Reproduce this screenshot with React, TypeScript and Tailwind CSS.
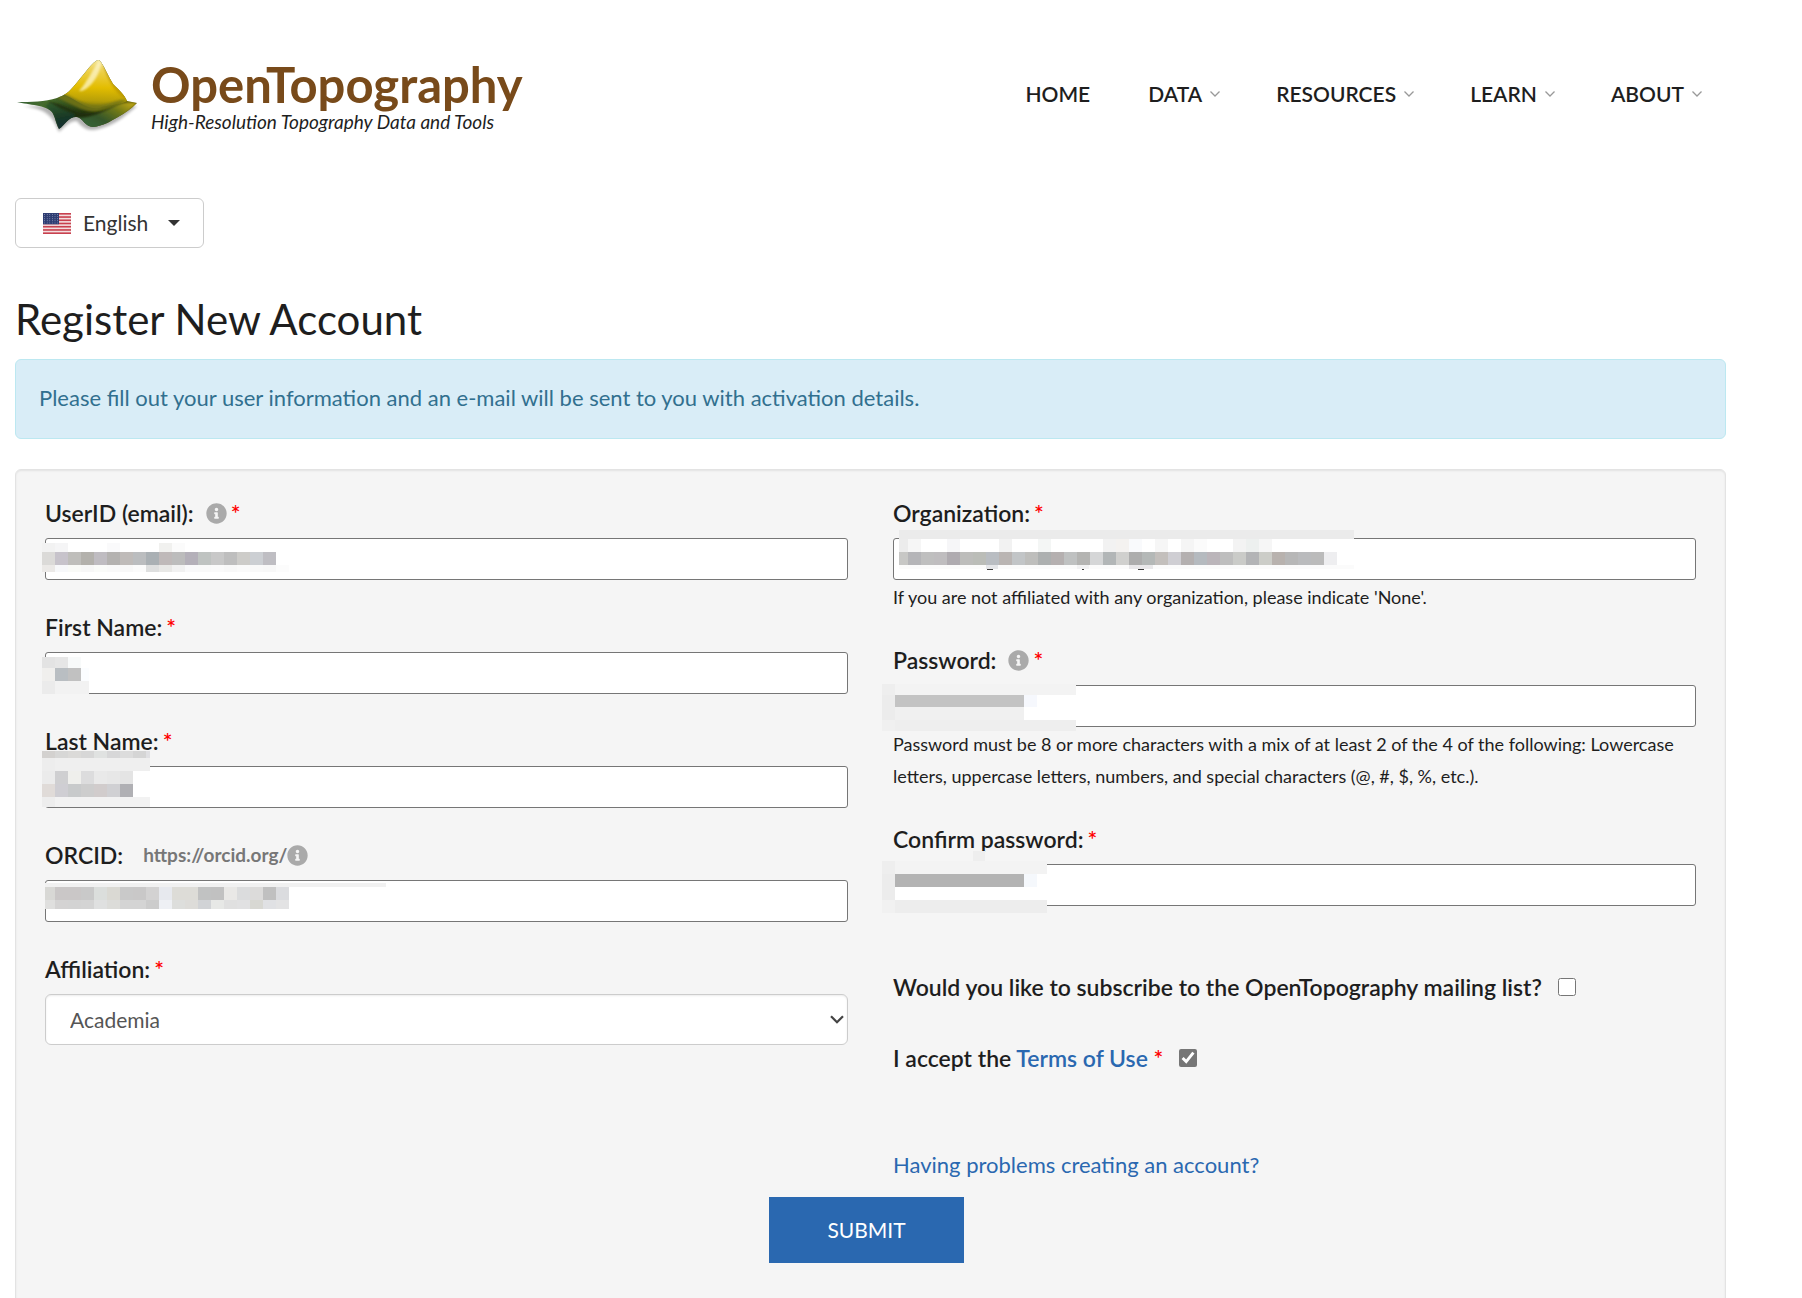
import React, { useState } from 'react';
import { FaInfoCircle } from 'react-icons/fa';

// [x, y, width, height, colour], measured from the top left of the field
type Block = [number, number, number, number, string];

// one row of equally wide blocks; an empty string leaves a gap
const row = (x: number, y: number, h: number, colors: string[], w = 13): Block[] =>
  colors
    .map((c, i): Block => [x + i * w, y, w, h, c])
    .filter((b) => b[4] !== '');

const USER_ID: Block[] = [
  ...row(-3, 5, 9, ['#f2f2f2', '#f5f5f6', '', '', '', '#fafafb', '', '', '', '#f1f1ef', '#fbfbfb']),
  ...row(-3, 14, 13, ['#dbdad8', '#c7c3cb', '#bfbebb', '#b3b1ac', '#bfbcc1', '#b4b2b0', '#bfbbb9', '#bbbdbf', '#aab0b4', '#bfb9b9', '#bcbcbc', '#b4b0b9', '#bfc3c1', '#c8c8c8', '#bebebe', '#cdccc9', '#cccfd3', '#bfbec3']),
  ...row(-3, 27, 7, ['#ebe9e7', '#f7f8fa', '#f9faf7', '#f7f7f7', '#fafbf9', '#f9f9f9', '#f8f8f8', '#fbfbfb', '#dedfdf', '#e8e8e6', '#f1f1f1', '#f9f9fa', '#f9f9f9', '#fafafa', '#f8f8f8', '#fafafa', '#f9f9f9', '#f8f8f8', '#fcfcfc']),
];

const FIRST_NAME: Block[] = [
  ...row(-3, 5, 11, ['#e3e3e3', '#e6e6e6', '#f8fafa']),
  ...row(-3, 16, 13, ['#f0efed', '#b9bec2', '#c1c1c1']),
  [36, 16, 8, 13, '#fbfdff'],
  [-3, 29, 13, 13, '#ebebeb'],
  [10, 29, 34, 13, '#f2f2f2'],
];

const LAST_NAME: Block[] = [
  ...row(-3, -15, 7, ['#d3d1cf', '#d7d7d6', '#dbdad8', '#d7d7d7', '#e0e2e1', '#d7d7d8', '#dcdcdc', '#d5d5d5']),
  [101, -15, 4, 7, '#e0e0e3'],
  [-3, -8, 13, 13, '#ededed'],
  [10, -8, 95, 13, '#efefef'],
  ...row(-3, 5, 13, ['#ebebeb', '#cfcfd1', '#efefec', '#dcdcdd', '#e9e9e9', '#e7e7e7', '#e4e4e4']),
  ...row(-3, 18, 13, ['#e0dbd8', '#cfced3', '#c8cacb', '#cdcdcd', '#d1cccc', '#d0d0d3', '#b0b0b4']),
  [-3, 31, 13, 10, '#ededed'],
  [10, 31, 95, 10, '#f2f2f2'],
];

const ORCID: Block[] = [
  [0, 3, 341, 4, '#f1f1f1'],
  [0, 7, 10, 13, '#d8d8d5'],
  ...row(10, 7, 13, ['#cac7c7', '#cac7c7', '#c9c9c9', '#dbdedc', '#dad9d3', '#c9c9c9', '#c9c8c8', '#d3d2d2', '#e7e9ee', '#dddcd7', '#dddcd7', '#c1c2c2', '#c1c1c1', '#e9e8e6', '#dbdcdd', '#dcdbda', '#c0c0c0', '#dbdcdf']),
  [0, 20, 10, 9, '#dfdfde'],
  ...row(10, 20, 9, ['#d4d3d3', '#d3d3d3', '#d4d4d4', '#dfe0e0', '#dcdcd9', '#d4d4d4', '#d4d4d4', '#cccccc', '#eef0f4', '#dddedc', '#dddcd9', '#d1d3d6', '#e7e8e6', '#e0e0e0', '#e1e1e2', '#d8d8d3', '#e0e1e4', '#e3e3e4']),
];

const ORGANIZATION: Block[] = [
  [6, -8, 455, 9, '#ebebeb'],
  [6, 1, 9, 13, '#ececec'],
  ...row(15, 1, 13, ['#f6f6f6', '#ffffff', '#ffffff', '#f6f6f8', '', '', '', '#f2f2f2', '', '', '#f4f6f5', '', '', '', '', '#f2f2f2', '#f4f2f0', '#f9fafc', '', '#f6f6f6', '', '#f5f5f5', '#fbfbfb', '', '', '#f3f3f3', '#edf0ef', '#f6f6f6']),
  [6, 14, 9, 13, '#c7c7c5'],
  ...row(15, 14, 13, ['#b5b5b8', '#bfbfbf', '#bfbdbf', '#afabb0', '#bdbdbb', '#bbbdb8', '#b9bdc2', '#bab5b3', '#c2c5c7', '#bebebc', '#adb0b0', '#b5b0b0', '#bfc1c1', '#b4b4b2', '#d5d6d7', '#b2b6b7', '#d0d0ce', '#adadad', '#b4b8b7', '#c3bfbc', '#cfced3', '#b4b0b0', '#b5babf', '#bbb5ba', '#bebebe', '#cacbc8', '#b3b4b6', '#cccdc8', '#b8b2ae', '#b7b7b7', '#babbbd', '#bbbbbb', '#eeeef0']),
  [6, 27, 455, 4, '#fbfbfb'],
  [93, 27, 12, 4, '#e5e6e9'],
  [184, 27, 12, 4, '#f2f2f3'],
  [236, 27, 24, 4, '#e9e8ea'],
  [94, 31, 6, 1, '#3a3a3a'],
  [189, 31, 2, 1, '#3a3a3a'],
  [245, 31, 6, 1, '#3a3a3a'],
];

const PASSWORD: Block[] = [
  [-11, -1, 13, 11, '#eeeeee'],
  [2, -1, 181, 11, '#f3f3f3'],
  [-11, 10, 13, 25, '#ececec'],
  [2, 10, 129, 12, '#c3c3c3'],
  [131, 10, 13, 12, '#f6f8fd'],
  [2, 22, 129, 13, '#f0f0f0'],
  [-11, 35, 13, 11, '#f0f0f0'],
  [2, 35, 181, 11, '#eeeeee'],
];

const CONFIRM: Block[] = [
  [80, -13, 12, 10, '#eeeeee'],
  [-11, -3, 13, 13, '#eeeeee'],
  [2, -3, 152, 13, '#f3f3f3'],
  [-11, 10, 13, 26, '#ececec'],
  [2, 10, 129, 13, '#b3b3b3'],
  [131, 10, 13, 13, '#f5f8fc'],
  [2, 23, 129, 13, '#ffffff'],
  [-11, 36, 13, 13, '#f1f1f1'],
  [2, 36, 152, 13, '#ededed'],
];

const Mosaic: React.FC<{ blocks: Block[] }> = ({ blocks }) => (
  <svg aria-hidden="true" className="absolute top-0 left-0 h-full w-full overflow-visible pointer-events-none" shapeRendering="crispEdges">
    {blocks.map(([x, y, w, h, fill], i) => (
      <rect key={i} x={x} y={y} width={w} height={h} fill={fill} />
    ))}
  </svg>
);

const Logo = () => (
  <svg aria-hidden="true" viewBox="0 0 124 82" className="h-[82px] w-[124px]">
    <defs>
      <linearGradient id="peak" x1="0.5" y1="0" x2="0.45" y2="1">
        <stop offset="0" stopColor="#f8efb8" />
        <stop offset="0.25" stopColor="#eed255" />
        <stop offset="0.6" stopColor="#e3bd00" />
        <stop offset="0.85" stopColor="#b8a008" />
        <stop offset="1" stopColor="#7a7810" />
      </linearGradient>
      <linearGradient id="base" x1="0" y1="0" x2="1" y2="0.3">
        <stop offset="0" stopColor="#2c5a3c" />
        <stop offset="0.4" stopColor="#466c2c" />
        <stop offset="0.7" stopColor="#25380f" />
        <stop offset="1" stopColor="#5c5a08" />
      </linearGradient>
      <linearGradient id="foot" x1="0.3" y1="0" x2="0.5" y2="1">
        <stop offset="0" stopColor="#2f5a2c" />
        <stop offset="0.5" stopColor="#1a3a26" />
        <stop offset="1" stopColor="#0e2b36" />
      </linearGradient>
      <linearGradient id="front" x1="1" y1="0" x2="0" y2="0.8">
        <stop offset="0" stopColor="#d0b010" />
        <stop offset="0.35" stopColor="#6f7818" />
        <stop offset="0.65" stopColor="#35562a" />
        <stop offset="1" stopColor="#37663a" />
      </linearGradient>
      <filter id="soft" x="-10%" y="-20%" width="120%" height="150%">
        <feGaussianBlur stdDeviation="1.6" />
      </filter>
      <filter id="blend" x="-20%" y="-20%" width="140%" height="140%">
        <feGaussianBlur stdDeviation="1.2" />
      </filter>
      <clipPath id="hill">
        <path d="M2 46 C16 46 30 46 42 42 C50 39 54 36 59 30 C67 21 75 9 81 5 C83 3 85 4 86 6 C90 12 93 20 98 28 C104 34 109 38 112 45 L122 47 C116 53 110 57 103 61 C96 65 88 70 78 71 C70 71 68 62 62 61 C54 60 50 69 44 73 C41 68 40 60 37 56 C31 49 14 49 2 46Z" />
      </clipPath>
    </defs>
    <path d="M8 50 C30 53 37 58 44 76 C50 70 56 64 62 65 C70 75 76 76 90 71 C104 66 112 58 122 50Z" fill="#000" opacity="0.3" filter="url(#soft)" />
    <g clipPath="url(#hill)">
      <rect width="124" height="82" fill="url(#base)" />
      <path d="M50 36 L84 0 L104 28 L114 44 C104 50 94 48 84 52 C72 54 62 44 48 38Z" fill="url(#peak)" />
      <path d="M84 4 C78 14 72 26 64 35 C72 36 84 22 86 8Z" fill="#fdf6cc" opacity="0.75" filter="url(#blend)" />
      <path d="M88 8 C92 22 98 36 112 44 L108 32 L94 14Z" fill="#b08d00" opacity="0.6" filter="url(#blend)" />
      <path d="M42 42 C54 46 66 56 82 56 C94 56 102 50 112 44 L106 44 C96 46 90 50 80 49 C68 49 60 42 50 38Z" fill="#757618" opacity="0.85" filter="url(#blend)" />
      <path d="M34 46 C48 47 58 55 68 57 C78 58 92 54 112 46 L104 52 L72 63 L56 62 C46 56 40 50 34 48Z" fill="#1d2c0c" opacity="0.75" filter="url(#blend)" />
      <path d="M36 47 C42 51 48 54 60 58 L58 64 L44 76 L38 60 L30 49Z" fill="url(#foot)" filter="url(#blend)" />
      <path d="M62 62 C76 62 88 56 102 49 C108 46 114 46 122 47 L106 62 L80 74 L70 70Z" fill="url(#front)" filter="url(#blend)" />
    </g>
  </svg>
);

const Flag = () => (
  <svg aria-hidden="true" viewBox="0 0 28 21" className="h-[21px] w-[28px]">
    <rect width="28" height="21" fill="#f3dfe0" />
    {[0, 1, 2, 3, 4, 5, 6].map((i) => (
      <rect key={i} y={i * 3.23} width="28" height="1.62" fill="#c8414f" />
    ))}
    <rect width="16" height="11.3" fill="#2f3d73" />
    {[0, 1, 2, 3, 4].map((r) =>
      [0, 1, 2, 3, 4, 5].map((c) => (
        <circle key={`${r}-${c}`} cx={1.6 + c * 2.6} cy={1.5 + r * 2.1} r="0.45" fill="#c3c9dd" />
      ))
    )}
  </svg>
);

const Required = () => <span className="text-[#ff0000]">*</span>;

const Info = () => <FaInfoCircle className="inline-block size-[21px] text-[#aaaaaa]" />;

const NAV = [
  { name: 'HOME', menu: false },
  { name: 'DATA', menu: true },
  { name: 'RESOURCES', menu: true },
  { name: 'LEARN', menu: true },
  { name: 'ABOUT', menu: true },
];

interface FieldProps {
  id: string
  label: React.ReactNode
  blocks: Block[]
  type?: string
  help?: string
}

const Field: React.FC<FieldProps> = ({ id, label, blocks, type = 'text', help }) => (
  <div>
    <label htmlFor={id} className="flex items-center gap-1 h-9 mb-[7px] font-semibold">
      {label}
    </label>
    <div className="relative">
      <input
        id={id}
        type={type}
        className="block w-full h-[42px] px-1 bg-white border border-[#767676] rounded-[3px]"
      />
      <Mosaic blocks={blocks} />
    </div>
    {help && <p className="mt-px text-lg leading-8">{help}</p>}
  </div>
);

const App = () => {
  const [subscribe, setSubscribe] = useState<boolean>(false);
  const [accepted, setAccepted] = useState<boolean>(true);
  const [affiliation, setAffiliation] = useState<string>('Academia');

  return (
    <div className="min-h-screen bg-white pl-[15px] pr-[76px] font-['Lato',sans-serif] text-[23px] leading-9 text-[#1e1e1e]">
      <header className="flex items-center justify-between pt-14">
        <a href="#" className="flex items-center gap-3">
          <Logo />
          <span>
            <span className="block text-[49px] leading-[50px] font-bold text-[#784a1a]">OpenTopography</span>
            <span className="block text-[19px] leading-[26px] italic">High-Resolution Topography Data and Tools</span>
          </span>
        </a>
        <nav className="flex items-center gap-[58px] pr-[26px] pb-1.5 text-[21px] font-semibold">
          {NAV.map((item) => (
            <a key={item.name} href="#" className="flex items-center gap-2">
              {item.name}
              {item.menu && (
                <svg aria-hidden="true" viewBox="1 0 8 8" className="size-2 overflow-visible" fill="none" stroke="#999" strokeWidth="1.3">
                  <path d="M1.5 1.5 L6 6 L10.5 1.5" />
                </svg>
              )}
            </a>
          ))}
        </nav>
      </header>

      <button className="mt-[60px] flex items-center h-[50px] w-[189px] pl-[27px] border border-[#cccccc] rounded-md text-[21px] text-[#333333]">
        <Flag />
        <span className="ml-3">English</span>
        <svg aria-hidden="true" viewBox="0 0 12 6" className="ml-5 h-1.5 w-3">
          <path d="M0 0 H12 L6 6Z" fill="#333" />
        </svg>
      </button>

      <h1 className="mt-11 text-[42px] leading-[54px]">Register New Account</h1>

      <div className="mt-[13px] px-[23px] pt-5 pb-[22px] bg-[#d9edf7] border border-[#bce8f1] rounded-md text-[22px] text-[#31708f]">
        Please fill out your user information and an e-mail will be sent to you with activation details.
      </div>

      <form
        onSubmit={(e) => e.preventDefault()}
        className="mt-[30px] px-[29px] pt-[25px] pb-20 bg-[#f5f5f5] border border-[#e3e3e3] rounded-md shadow-[inset_0_1px_2px_rgba(0,0,0,0.08)]"
      >
        <div className="grid grid-cols-2 gap-x-[45px]">
          <div className="flex flex-col gap-[29px]">
            <Field id="user-id" label={<><span className="mr-2">UserID (email):</span><Info /><Required /></>} blocks={USER_ID} />
            <Field id="first-name" label={<>First Name: <Required /></>} blocks={FIRST_NAME} />
            <Field id="last-name" label={<>Last Name: <Required /></>} blocks={LAST_NAME} />
            <Field
              id="orcid"
              label={<>ORCID: <span className="ml-4 flex items-center text-[19px] font-bold text-[#777777]">https://orcid.org/<Info /></span></>}
              blocks={ORCID}
            />
            <div>
              <label htmlFor="affiliation" className="flex items-center gap-1 h-9 mb-[7px] font-semibold">
                Affiliation: <Required />
              </label>
              <div className="relative">
                <select
                  id="affiliation"
                  value={affiliation}
                  onChange={(e) => setAffiliation(e.target.value)}
                  className="block w-full h-[51px] pl-6 appearance-none bg-white border border-[#cccccc] rounded-md text-[21px] text-[#555555] shadow-[inset_0_1px_2px_rgba(0,0,0,0.08)]"
                >
                  <option>Academia</option>
                </select>
                <svg aria-hidden="true" viewBox="0 0 14 9" className="absolute right-1 top-[21px] h-[9px] w-3.5 pointer-events-none" fill="none" stroke="#444" strokeWidth="2.2">
                  <path d="M1 1.2 L7 7.2 L13 1.2" />
                </svg>
              </div>
            </div>
          </div>

          <div className="flex flex-col gap-[29px]">
            <Field
              id="organization"
              label={<>Organization: <Required /></>}
              blocks={ORGANIZATION}
              help="If you are not affiliated with any organization, please indicate 'None'."
            />
            <Field
              id="password"
              type="password"
              label={<><span className="mr-2">Password:</span><Info /><Required /></>}
              blocks={PASSWORD}
              help="Password must be 8 or more characters with a mix of at least 2 of the 4 of the following: Lowercase letters, uppercase letters, numbers, and special characters (@, #, $, %, etc.)."
            />
            <Field id="confirm" type="password" label={<>Confirm password: <Required /></>} blocks={CONFIRM} />

            <div className="mt-[34px] flex items-center gap-4 font-semibold">
              <label htmlFor="subscribe">Would you like to subscribe to the OpenTopography mailing list?</label>
              <input
                id="subscribe"
                type="checkbox"
                checked={subscribe}
                onChange={(e) => setSubscribe(e.target.checked)}
                className="size-[18px] accent-[#767676]"
              />
            </div>
            <div className="mt-1.5 flex items-center gap-4 font-semibold">
              <label htmlFor="terms">
                I accept the <a href="#" className="text-[#2a68b0]">Terms of Use</a> <Required />
              </label>
              <input
                id="terms"
                type="checkbox"
                checked={accepted}
                onChange={(e) => setAccepted(e.target.checked)}
                className="size-[18px] accent-[#767676]"
              />
            </div>
            <a href="#" className="mt-[42px] self-start text-[22px] text-[#2a68b0]">Having problems creating an account?</a>
          </div>
        </div>
        <div className="mt-3.5 pr-2 text-center">
          <button type="submit" className="h-[66px] w-[195px] bg-[#2a68b0] text-[21px] text-white">SUBMIT</button>
        </div>
      </form>
    </div>
  );
};

export default App;
